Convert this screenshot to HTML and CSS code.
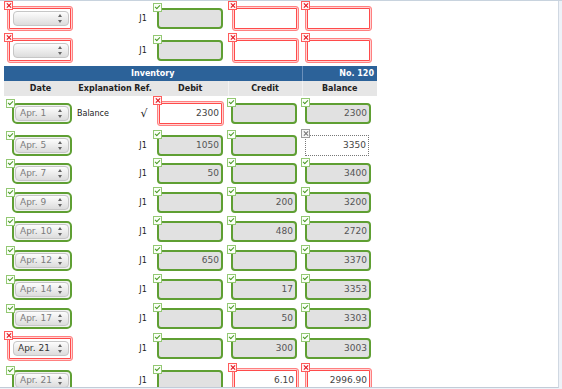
FILE: index.html
```html
<!DOCTYPE html>
<html lang="en">
<head>
    <meta charset="UTF-8">
    <title>Inventory ledger</title>
    <link rel="stylesheet" href="styles.css">
</head>
<body>
<div class="frame">
    <table class="ledger">
        <colgroup>
            <col class="c-date"><col class="c-expl"><col class="c-ref">
            <col class="c-debit"><col class="c-credit"><col class="c-bal">
        </colgroup>
        <tr class="top-a">
            <td><span class="pick bad"><span class="sel"></span><i class="mk bad"></i></span></td>
            <td></td>
            <td class="ref">J1</td>
            <td class="debit"><span class="fld ok"><i class="mk ok"></i></span></td>
            <td class="credit"><span class="fld bad"><i class="mk bad"></i></span></td>
            <td class="bal"><span class="fld bad"><i class="mk bad"></i></span></td>
        </tr>
        <tr class="top-b">
            <td><span class="pick bad"><span class="sel"></span><i class="mk bad"></i></span></td>
            <td></td>
            <td class="ref">J1</td>
            <td class="debit"><span class="fld ok"><i class="mk ok"></i></span></td>
            <td class="credit"><span class="fld bad"><i class="mk bad"></i></span></td>
            <td class="bal"><span class="fld bad"><i class="mk bad"></i></span></td>
        </tr>
        <tr class="bar">
            <th colspan="5">Inventory</th>
            <th class="acct">No. 120</th>
        </tr>
        <tr class="heads">
            <th>Date</th>
            <th>Explanation</th>
            <th>Ref.</th>
            <th>Debit</th>
            <th class="sep">Credit</th>
            <th class="sep">Balance</th>
        </tr>
        <tr class="tall">
            <td><span class="pick ok"><span class="sel">Apr. 1</span><i class="mk ok"></i></span></td>
            <td class="expl">Balance</td>
            <td class="ref tick">&radic;</td>
            <td class="debit"><span class="fld bad">2300<i class="mk bad"></i></span></td>
            <td class="credit"><span class="fld ok"><i class="mk ok"></i></span></td>
            <td class="bal"><span class="fld ok">2300<i class="mk ok"></i></span></td>
        </tr>
        <tr class="short">
            <td><span class="pick ok"><span class="sel">Apr. 5</span><i class="mk ok"></i></span></td>
            <td></td>
            <td class="ref">J1</td>
            <td class="debit"><span class="fld ok">1050<i class="mk ok"></i></span></td>
            <td class="credit"><span class="fld ok"><i class="mk ok"></i></span></td>
            <td class="bal"><span class="fld off">3350<i class="mk off"></i></span></td>
        </tr>
        <tr>
            <td><span class="pick ok"><span class="sel">Apr. 7</span><i class="mk ok"></i></span></td>
            <td></td>
            <td class="ref">J1</td>
            <td class="debit"><span class="fld ok">50<i class="mk ok"></i></span></td>
            <td class="credit"><span class="fld ok"><i class="mk ok"></i></span></td>
            <td class="bal"><span class="fld ok">3400<i class="mk ok"></i></span></td>
        </tr>
        <tr>
            <td><span class="pick ok"><span class="sel">Apr. 9</span><i class="mk ok"></i></span></td>
            <td></td>
            <td class="ref">J1</td>
            <td class="debit"><span class="fld ok"><i class="mk ok"></i></span></td>
            <td class="credit"><span class="fld ok">200<i class="mk ok"></i></span></td>
            <td class="bal"><span class="fld ok">3200<i class="mk ok"></i></span></td>
        </tr>
        <tr>
            <td><span class="pick ok"><span class="sel">Apr. 10</span><i class="mk ok"></i></span></td>
            <td></td>
            <td class="ref">J1</td>
            <td class="debit"><span class="fld ok"><i class="mk ok"></i></span></td>
            <td class="credit"><span class="fld ok">480<i class="mk ok"></i></span></td>
            <td class="bal"><span class="fld ok">2720<i class="mk ok"></i></span></td>
        </tr>
        <tr>
            <td><span class="pick ok"><span class="sel">Apr. 12</span><i class="mk ok"></i></span></td>
            <td></td>
            <td class="ref">J1</td>
            <td class="debit"><span class="fld ok">650<i class="mk ok"></i></span></td>
            <td class="credit"><span class="fld ok"><i class="mk ok"></i></span></td>
            <td class="bal"><span class="fld ok">3370<i class="mk ok"></i></span></td>
        </tr>
        <tr>
            <td><span class="pick ok"><span class="sel">Apr. 14</span><i class="mk ok"></i></span></td>
            <td></td>
            <td class="ref">J1</td>
            <td class="debit"><span class="fld ok"><i class="mk ok"></i></span></td>
            <td class="credit"><span class="fld ok">17<i class="mk ok"></i></span></td>
            <td class="bal"><span class="fld ok">3353<i class="mk ok"></i></span></td>
        </tr>
        <tr>
            <td><span class="pick ok"><span class="sel">Apr. 17</span><i class="mk ok"></i></span></td>
            <td></td>
            <td class="ref">J1</td>
            <td class="debit"><span class="fld ok"><i class="mk ok"></i></span></td>
            <td class="credit"><span class="fld ok">50<i class="mk ok"></i></span></td>
            <td class="bal"><span class="fld ok">3303<i class="mk ok"></i></span></td>
        </tr>
        <tr class="mid">
            <td><span class="pick bad"><span class="sel">Apr. 21</span><i class="mk bad"></i></span></td>
            <td></td>
            <td class="ref">J1</td>
            <td class="debit"><span class="fld ok"><i class="mk ok"></i></span></td>
            <td class="credit"><span class="fld ok">300<i class="mk ok"></i></span></td>
            <td class="bal"><span class="fld ok">3003<i class="mk ok"></i></span></td>
        </tr>
        <tr class="tall">
            <td><span class="pick ok"><span class="sel">Apr. 21</span><i class="mk ok"></i></span></td>
            <td></td>
            <td class="ref">J1</td>
            <td class="debit"><span class="fld ok"><i class="mk ok"></i></span></td>
            <td class="credit"><span class="fld bad">6.10<i class="mk bad"></i></span></td>
            <td class="bal"><span class="fld bad">2996.90<i class="mk bad"></i></span></td>
        </tr>
    </table>
</div>
</body>
</html>
```

FILE: styles.css
```css
* {
    box-sizing: border-box;
}

body {
    margin: 0;
    background-color: #eef2f8;
    border-top: 1px solid #c8d3de;
    font-family: "DejaVu Sans", Verdana, sans-serif;
    color: #222;
}

.frame {
    width: 559px;
    height: 387px;
    background-color: #fff;
    border-right: 1px solid #d0d8e2;
    border-bottom: 1px solid #c2ccd8;
    overflow: hidden;
}

.ledger {
    margin-left: 4px;
    width: 373px;
    border-collapse: collapse;
    table-layout: fixed;
    font-size: 8px;
}

.ledger td,
.ledger th {
    padding: 0;
    vertical-align: middle;
}

.c-date { width: 73px; }
.c-expl { width: 56px; }
.c-ref { width: 20px; }
.c-debit { width: 75px; }
.c-credit { width: 74px; }
.c-bal { width: 75px; }

/* row heights */
.ledger tr { height: 29px; }
.ledger tr.top-a { height: 34px; }
.ledger tr.top-b { height: 31px; }
.ledger tr.bar,
.ledger tr.heads { height: 15px; }
.ledger tr.tall { height: 35px; }
.ledger tr.short { height: 28px; }
.ledger tr.mid { height: 30px; }

.bar th {
    height: 15px;
    background-color: #2c6299;
    color: #fff;
    font-weight: bold;
    font-size: 8px;
}

.bar .acct {
    text-align: right;
    padding-right: 3px;
    border-left: 1px solid #6b90bb;
}

.heads th {
    height: 15px;
    background-color: #e6e6e6;
    font-weight: bold;
    font-size: 8px;
    color: #222;
}

.heads .sep {
    border-left: 1px solid #f3f3f3;
}

.ref {
    text-align: center;
}

.ref.tick {
    font-size: 11px;
    padding-left: 2px;
}

.expl {
    white-space: nowrap;
}

/* markers */
.mk {
    position: absolute;
    width: 9px;
    height: 9px;
    border: 1px solid;
}

.mk.ok {
    border-color: #93c873;
    background-color: #fbfff8;
}

.mk.ok::after {
    content: '';
    position: absolute;
    left: 1px;
    top: 1px;
    width: 4px;
    height: 2px;
    border-left: 1px solid #4a9a26;
    border-bottom: 1px solid #4a9a26;
    transform: rotate(-45deg);
}

.mk.bad {
    border-color: #ff5b5b;
    background-color: #fff4f4;
}

.mk.off {
    border-color: #9c9c9c;
    background-color: #f6f6f6;
}

.mk.bad::before,
.mk.bad::after,
.mk.off::before,
.mk.off::after {
    content: '';
    position: absolute;
    left: 0.5px;
    top: 3px;
    width: 6px;
    height: 1px;
    background-color: #e3141e;
    transform: rotate(45deg);
}

.mk.bad::after,
.mk.off::after {
    transform: rotate(-45deg);
}

.mk.off::before,
.mk.off::after {
    background-color: #777;
}

/* amount fields */
.fld {
    display: block;
    position: relative;
    font-size: 9px;
    text-align: right;
}

.fld.ok {
    width: 66px;
    height: 21px;
    line-height: 17px;
    padding-right: 2px;
    border: 2px solid #5f9f33;
    border-radius: 4px;
    background-color: #e1e1e1;
    color: #555;
}

.fld.ok .mk {
    left: -6px;
    top: -7px;
}

.fld.bad {
    width: 67px;
    height: 25px;
    line-height: 23px;
    padding-right: 4px;
    border: 1px solid #ff8080;
    border-radius: 3px;
    box-shadow: inset 0 0 0 1px #ffd4d4, inset 0 0 0 2px #ff4b4b;
    background-color: #fff;
    color: #444;
}

.fld.bad .mk {
    left: -5px;
    top: -6px;
}

.fld.off {
    width: 64px;
    height: 21px;
    line-height: 19px;
    padding-right: 2px;
    border: 1px dotted #777;
    background-color: #fff;
    color: #444;
}

.fld.off .mk {
    left: -5px;
    top: -7px;
}

.debit .fld { margin-left: 4px; }
.credit .fld { margin-left: 3px; }
.credit .fld.bad { margin-left: 4px; }
.bal .fld { margin-left: 3px; }

/* date pickers */
.pick {
    display: block;
    position: relative;
}

.pick.ok {
    width: 60px;
    margin-left: 8px;
    padding: 1px;
    border: 2px solid #5f9f33;
    border-radius: 5px;
    background-color: #f2f2f2;
}

.pick.ok .mk {
    left: -8px;
    top: -6px;
}

.pick.ok .sel {
    width: 54px;
    color: #7c7c7c;
}

.pick.bad {
    width: 66px;
    margin-left: 3px;
    padding: 4px 5px;
    border: 1px solid #ff8080;
    border-radius: 3px;
    box-shadow: inset 0 0 0 1px #ffd4d4, inset 0 0 0 2px #ff4b4b;
    background-color: #fff;
}

.pick.bad .mk {
    left: -4px;
    top: -6px;
}

.pick.bad .sel {
    width: 56px;
    color: #333;
}

.sel {
    display: block;
    position: relative;
    height: 15px;
    line-height: 13px;
    padding-left: 4px;
    font-size: 9px;
    border: 1px solid #c6c6c6;
    border-radius: 4px;
    background-image: linear-gradient(to bottom, #fdfdfd, #dcdcdc);
    white-space: nowrap;
}

.sel::before,
.sel::after {
    content: '';
    position: absolute;
    right: 6px;
    border-left: 2px solid transparent;
    border-right: 2px solid transparent;
}

.sel::before {
    top: 2px;
    border-bottom: 3px solid #666;
}

.sel::after {
    bottom: 2px;
    border-top: 3px solid #666;
}
```
